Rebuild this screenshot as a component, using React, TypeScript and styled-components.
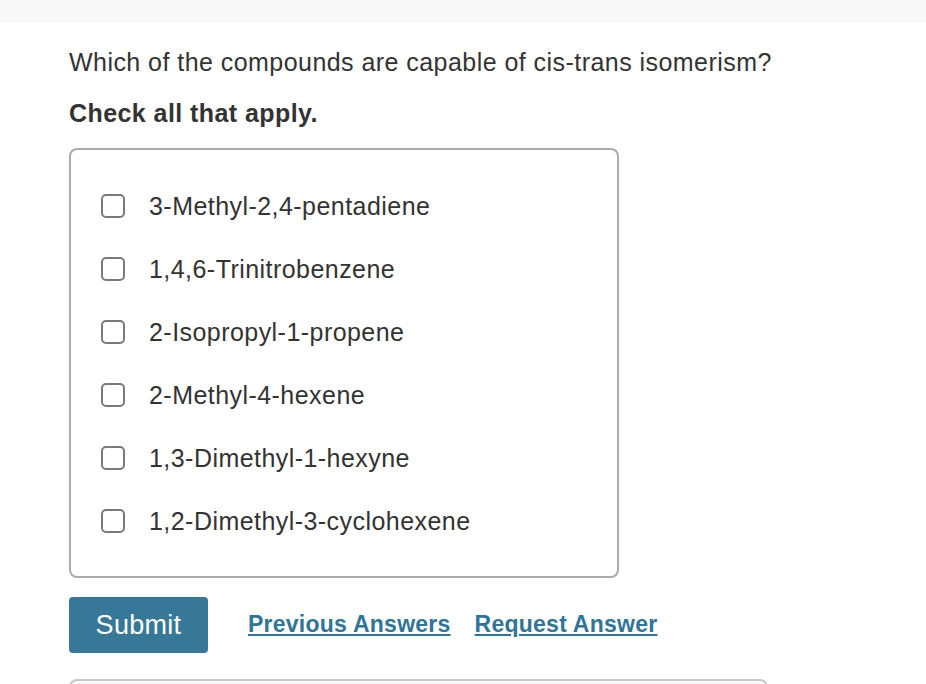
import styled, { createGlobalStyle } from 'styled-components';

const GlobalStyle = createGlobalStyle`
  html, body {
    margin: 0;
    padding: 0;
    background: #fff;
  }
  body {
    font-family: 'Liberation Sans', Arial, Helvetica, sans-serif;
    color: #333;
  }
`;

const options = [
  '3-Methyl-2,4-pentadiene',
  '1,4,6-Trinitrobenzene',
  '2-Isopropyl-1-propene',
  '2-Methyl-4-hexene',
  '1,3-Dimethyl-1-hexyne',
  '1,2-Dimethyl-3-cyclohexene',
];

export default function App() {
  return (
    <Page>
      <GlobalStyle />
      <TopBar />
      <Content>
        <Question>Which of the compounds are capable of cis-trans isomerism?</Question>
        <Instruction>Check all that apply.</Instruction>
        <OptionsBox>
          {options.map((o) => (
            <Option key={o}>
              <Box type="checkbox" />
              <span>{o}</span>
            </Option>
          ))}
        </OptionsBox>
        <Actions>
          <SubmitButton>Submit</SubmitButton>
          <LinkButton href="#">Previous Answers</LinkButton>
          <LinkButton href="#">Request Answer</LinkButton>
        </Actions>
        <NextPanel />
      </Content>
    </Page>
  );
}

const Page = styled.div`
  width: 926px;
  height: 684px;
  overflow: hidden;
`;

const TopBar = styled.div`
  height: 23px;
  background: #f8f8f8;
`;

const Content = styled.div`
  padding: 0 0 0 69px;
`;

const Question = styled.p`
  margin: 24px 0 0;
  font-size: 25px;
  letter-spacing: 0.45px;
  line-height: 30px;
  color: #333;
`;

const Instruction = styled.p`
  margin: 21px 0 0;
  font-size: 25px;
  letter-spacing: 0.43px;
  line-height: 30px;
  font-weight: bold;
  color: #333;
`;

const OptionsBox = styled.div`
  margin-top: 20px;
  width: 550px;
  box-sizing: border-box;
  border: 2px solid #ababab;
  border-radius: 8px;
  padding: 41px 0 40px 30px;
  display: flex;
  flex-direction: column;
  gap: 33px;
`;

const Option = styled.label`
  display: flex;
  align-items: center;
  gap: 24px;
  font-size: 25px;
  letter-spacing: 0.45px;
  line-height: 30px;
  color: #333;
`;

const Box = styled.input`
  appearance: none;
  margin: 0;
  width: 24px;
  height: 24px;
  box-sizing: border-box;
  border: 2px solid #7a7a7a;
  border-radius: 5px;
  background: #fff;
`;

const Actions = styled.div`
  margin-top: 19px;
  display: flex;
  align-items: center;
  gap: 24px;
`;

const SubmitButton = styled.button`
  width: 139px;
  height: 56px;
  margin-right: 16px;
  border: none;
  border-radius: 4px;
  background: #377899;
  color: #fff;
  font-family: 'Liberation Sans', Arial, sans-serif;
  font-size: 27px;
  letter-spacing: 0.3px;
`;

const LinkButton = styled.a`
  margin-bottom: 1px;
  color: #2f7499;
  font-size: 23px;
  letter-spacing: 0.25px;
  font-weight: bold;
  text-decoration: underline;
`;

const NextPanel = styled.div`
  margin-top: 26px;
  width: 699px;
  height: 40px;
  box-sizing: border-box;
  border: 2px solid #c8c8c8;
  border-radius: 8px;
  background: #fafafa;
`;
